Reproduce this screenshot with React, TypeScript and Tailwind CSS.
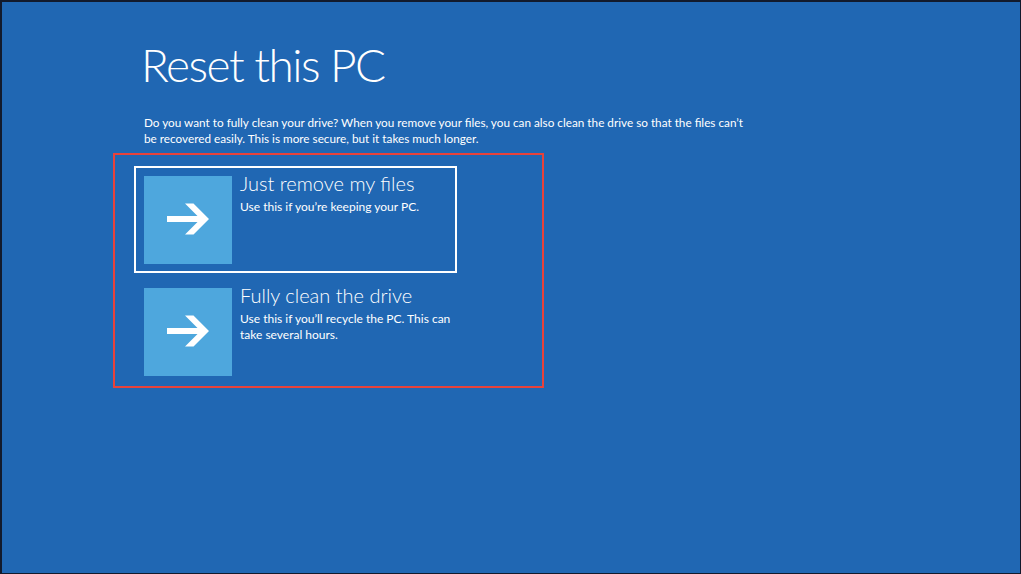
function Arrow() {
  return (
    <svg width="88" height="88" viewBox="0 0 88 88">
      <polygon
        points="23,40 53.5,40 41,27.5 49.5,27.5 65,43 49.5,58.5 41,58.5 53.5,46 23,46"
        fill="#ffffff"
      />
    </svg>
  )
}

function Option({ title, desc, selected }: { title: string; desc: React.ReactNode; selected?: boolean }) {
  return (
    <div
      className={`flex w-[323px] h-[107px] pt-[8px] pl-[8px] border-2 ${selected ? 'border-white' : 'border-transparent'}`}
    >
      <div className="w-[88px] h-[88px] shrink-0 bg-[#4ea7dd]">
        <Arrow />
      </div>
      <div className="pl-[8px] text-white whitespace-nowrap">
        <div className="text-[20px] leading-[24px] font-light -mt-[5px]">{title}</div>
        <div className="text-[12px] leading-[16px] mt-[4px]">{desc}</div>
      </div>
    </div>
  )
}

export default function App() {
  return (
    <main
      className="w-[1021px] h-[574px] bg-[#2067b3] border-t-2 border-l-2 border-r border-b border-[#121a2c] overflow-hidden"
      style={{ fontFamily: 'Lato, "Open Sans", sans-serif' }}
    >
      <div className="pl-[139px] pt-[32px]">
        <h1 className="text-[46px] leading-[62px] font-light tracking-[-1.5px] text-white">Reset this PC</h1>
        <p className="mt-[19px] ml-[3px] text-[11.75px] leading-[16px] text-white whitespace-nowrap">
          Do you want to fully clean your drive? When you remove your files, you can also clean the drive so that the files can’t
          <br />
          be recovered easily. This is more secure, but it takes much longer.
        </p>
      </div>
      <div className="ml-[111px] mt-[6px] w-[431px] h-[235px] border-2 border-[#e8423a] pt-[11px] pl-[19px] flex flex-col gap-[5px]">
        <Option title="Just remove my files" desc="Use this if you’re keeping your PC." selected />
        <Option
          title="Fully clean the drive"
          desc={
            <>
              Use this if you’ll recycle the PC. This can
              <br />
              take several hours.
            </>
          }
        />
      </div>
    </main>
  )
}
